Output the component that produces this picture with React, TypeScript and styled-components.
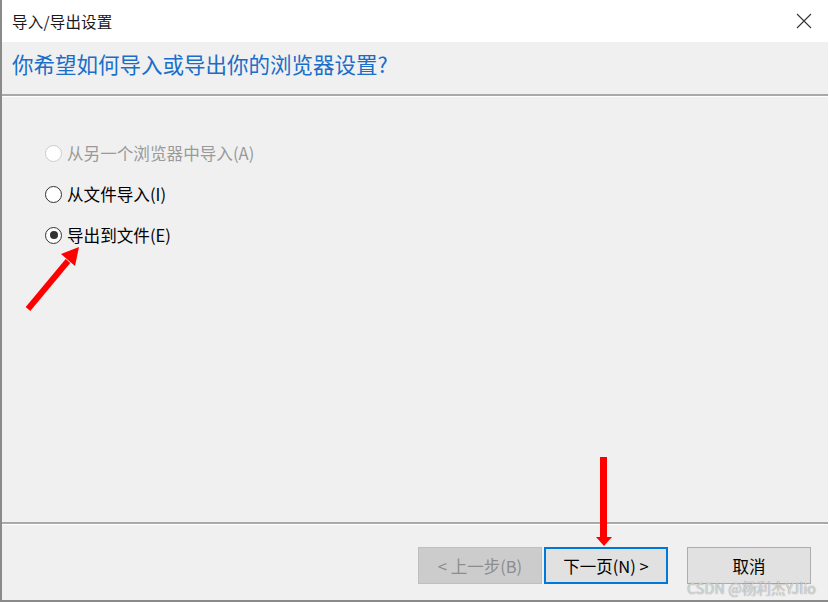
import React from "react";
import styled, { createGlobalStyle } from "styled-components";

const Global = createGlobalStyle`
  html, body { margin: 0; padding: 0; background: #ffffff; }
  body { font-family: "Noto Sans CJK SC", "Noto Sans", "Liberation Sans", sans-serif; }
  * { box-sizing: border-box; }
`;

const Window = styled.div`
  position: relative;
  width: 828px;
  height: 602px;
  display: flex;
  flex-direction: column;
  border-left: 2px solid #8a8a8a;
  border-bottom: 2px solid #8a8a8a;
  background: #f0f0f0;
  overflow: hidden;
`;

const TitleBar = styled.div`
  height: 42px;
  flex: none;
  display: flex;
  align-items: center;
  justify-content: space-between;
  padding: 0 12px 0 10px;
  background: #ffffff;
`;

const TitleText = styled.span`
  font-size: 15.5px;
  color: #1a1a1a;
  letter-spacing: 0.2px;
`;

const CloseButton = styled.div`
  width: 20px;
  height: 20px;
  display: flex;
  align-items: center;
  justify-content: center;
  margin-right: 2px;
`;

const Header = styled.div`
  height: 52px;
  flex: none;
  padding: 7px 0 0 10px;
`;

const Heading = styled.h1`
  margin: 0;
  font-weight: 400;
  font-size: 21.5px;
  line-height: 30px;
  color: #1a6ec9;
`;

const Divider = styled.div`
  flex: none;
  height: 3px;
  border-top: 2px solid #a9a9a9;
  border-bottom: 1px solid #ffffff;
`;

const Body = styled.div`
  height: 425px;
  flex: none;
  display: flex;
  flex-direction: column;
  gap: 17px;
  padding: 44px 0 0 43px;
`;

const OptionRow = styled.label<{ $disabled?: boolean }>`
  height: 24px;
  display: flex;
  align-items: center;
  gap: 5px;
  font-size: 16.6px;
  color: ${(p) => (p.$disabled ? "#9a9a9a" : "#000000")};
`;

const RadioCircle = styled.span<{ $disabled?: boolean; $checked?: boolean }>`
  width: 17px;
  height: 17px;
  border-radius: 50%;
  border: 1px solid ${(p) => (p.$disabled ? "#cccccc" : "#333333")};
  background: #ffffff;
  display: flex;
  align-items: center;
  justify-content: center;
  flex: none;
  &::after {
    content: "";
    display: ${(p) => (p.$checked ? "block" : "none")};
    width: 8px;
    height: 8px;
    border-radius: 50%;
    background: #333333;
  }
`;

const Footer = styled.div`
  flex: 1;
  display: flex;
  justify-content: flex-end;
  align-items: flex-start;
  padding: 22px 17px 0 0;
`;

const ButtonGroup = styled.div`
  display: flex;
  gap: 2px;
  margin-right: 19px;
`;

const Button = styled.div<{ $variant?: "disabled" | "focused" | "normal" }>`
  width: 124px;
  height: 37px;
  display: flex;
  align-items: center;
  justify-content: center;
  font-size: 16.5px;
  background: ${(p) => (p.$variant === "disabled" ? "#cccccc" : "#e1e1e1")};
  color: ${(p) => (p.$variant === "disabled" ? "#8c8c8c" : "#000000")};
  border: ${(p) =>
    p.$variant === "focused"
      ? "2px solid #0078d7"
      : p.$variant === "disabled"
      ? "1px solid #bfbfbf"
      : "1px solid #adadad"};
`;

const Watermark = styled.div`
  position: absolute;
  left: 685px;
  top: 579px;
  font-size: 14.5px;
  line-height: 18px;
  color: rgba(250, 250, 250, 0.7);
  text-shadow: 0 0 1px rgba(0, 0, 0, 0.55);
  white-space: nowrap;
  pointer-events: none;
`;

const ArrowLayer = styled.svg`
  position: absolute;
  left: -2px;
  top: 0;
  pointer-events: none;
`;

const options = [
  { label: "从另一个浏览器中导入(A)", disabled: true, checked: false },
  { label: "从文件导入(I)", disabled: false, checked: false },
  { label: "导出到文件(E)", disabled: false, checked: true },
];

export default function App() {
  return (
    <>
      <Global />
      <Window>
        <TitleBar>
          <TitleText>导入/导出设置</TitleText>
          <CloseButton>
            <svg width="16" height="16" viewBox="0 0 16 16">
              <path d="M1 1 L15 15 M15 1 L1 15" stroke="#333" strokeWidth="1.1" />
            </svg>
          </CloseButton>
        </TitleBar>
        <Header>
          <Heading>你希望如何导入或导出你的浏览器设置?</Heading>
        </Header>
        <Divider />
        <Body>
          {options.map((o) => (
            <OptionRow key={o.label} $disabled={o.disabled}>
              <RadioCircle $disabled={o.disabled} $checked={o.checked} />
              {o.label}
            </OptionRow>
          ))}
        </Body>
        <Divider />
        <Footer>
          <ButtonGroup>
            <Button $variant="disabled">&lt; 上一步(B)</Button>
            <Button $variant="focused">下一页(N) &gt;</Button>
          </ButtonGroup>
          <Button $variant="normal">取消</Button>
        </Footer>
        <Watermark>CSDN @杨利杰YJlio</Watermark>
        <ArrowLayer width="829" height="602" viewBox="0 0 829 602">
          <line x1="28" y1="309" x2="68" y2="261" stroke="#ff0000" strokeWidth="6" />
          <polygon points="79,247 61,254 75,266" fill="#ff0000" />
          <rect x="600" y="457" width="7" height="82" fill="#ff0000" />
          <polygon points="596,537 612,537 604,546" fill="#ff0000" />
        </ArrowLayer>
      </Window>
    </>
  );
}
